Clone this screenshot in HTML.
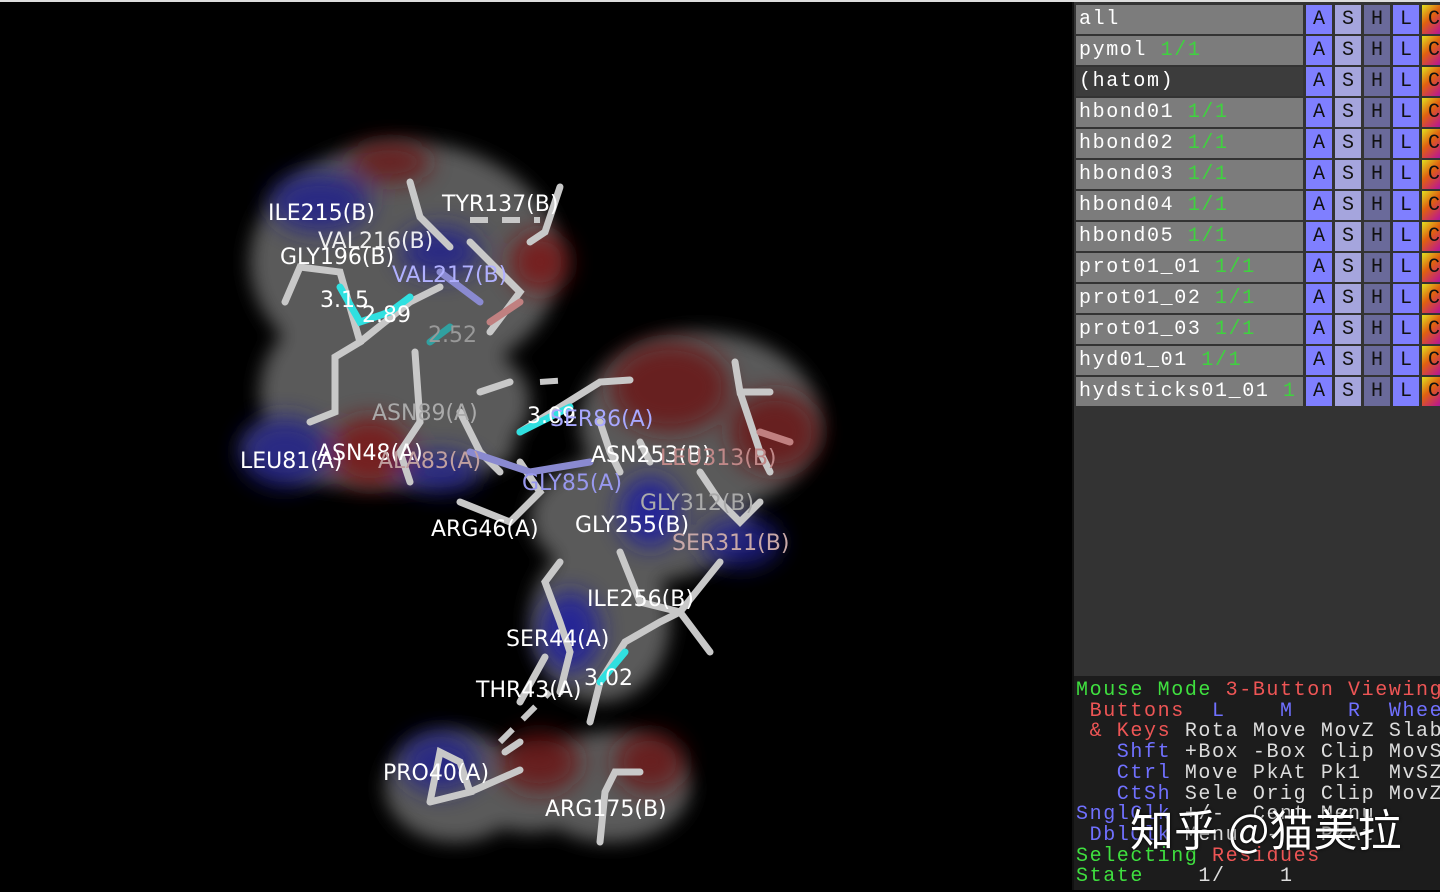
<!DOCTYPE html>
<html><head><meta charset="utf-8"><style>
html,body{margin:0;padding:0;background:#000;width:1440px;height:890px;overflow:hidden;}
#top{position:absolute;left:0;top:0;width:1440px;height:2px;background:#ddd;}
#panel{position:absolute;left:1072px;top:2px;width:368px;height:888px;background:#333;border-left:2px solid #111;}
.row{position:absolute;left:2px;height:29px;width:368px;}
.nm{position:absolute;left:0;top:0;width:227px;height:29px;background:#7c7c7c;color:#fff;font:20px "Liberation Mono",monospace;letter-spacing:1.6px;line-height:29px;padding-left:3px;box-sizing:border-box;white-space:nowrap;overflow:hidden;}
.nm.dk{background:#3c3c3c}
.nm b{font-weight:normal;color:#3fd23f}
.bt{position:absolute;top:0;width:26px;height:29px;font:20px "Liberation Mono",monospace;line-height:29px;text-align:center;color:#111;}
.A{left:230px;background:#7f7fff}.S{left:259px;background:#a5a5dd}.H{left:288px;background:#6a6a9a}.L{left:317px;background:#7f7fff}
.C{left:346px;width:24px;background:linear-gradient(135deg,#e0e020,#e06010 40%,#c02080 80%,#8020c0);}
#info{position:absolute;left:1074px;top:676px;width:366px;height:214px;background:#1c1c1c;font:20px "Liberation Mono",monospace;letter-spacing:1.6px;line-height:20.7px;white-space:pre;color:#ddd;padding-top:5px;padding-left:2px;box-sizing:border-box;overflow:hidden;}
.g{color:#3fe03f}.r{color:#ee5555}.b{color:#7070ff}
#wm{position:absolute;left:1130px;top:795px;font:44px "Noto Sans CJK SC",sans-serif;color:#fff;text-shadow:0 0 3px #000;}
svg text{font-family:"DejaVu Sans","Liberation Sans",sans-serif;font-size:22px;}
</style></head><body>
<div id="top"></div>
<svg width="1072" height="890" style="position:absolute;left:0;top:2px">
<defs>
<filter id="bl" x="-30%" y="-30%" width="160%" height="160%"><feGaussianBlur stdDeviation="9"/></filter>
<filter id="bl2" x="-50%" y="-50%" width="200%" height="200%"><feGaussianBlur stdDeviation="12"/></filter>
</defs>
<g filter="url(#bl)" fill="#5a5a5a">
<ellipse cx="405" cy="260" rx="155" ry="120"/>
<ellipse cx="360" cy="390" rx="100" ry="90"/>
<ellipse cx="380" cy="445" rx="135" ry="40"/>
<ellipse cx="450" cy="400" rx="80" ry="60"/>
<ellipse cx="700" cy="420" rx="120" ry="90"/>
<ellipse cx="640" cy="515" rx="110" ry="65"/>
<ellipse cx="600" cy="620" rx="70" ry="80"/>
<ellipse cx="455" cy="785" rx="70" ry="55"/>
<ellipse cx="610" cy="785" rx="80" ry="55"/>
<ellipse cx="530" cy="790" rx="60" ry="40"/>
</g>
<g filter="url(#bl2)" opacity="0.85">
<ellipse cx="320" cy="200" rx="50" ry="30" fill="#22228a"/>
<ellipse cx="440" cy="250" rx="40" ry="25" fill="#22228a"/>
<ellipse cx="540" cy="260" rx="30" ry="30" fill="#7a1818"/>
<ellipse cx="390" cy="160" rx="40" ry="20" fill="#6a1818"/>
<ellipse cx="285" cy="450" rx="45" ry="35" fill="#22228a"/>
<ellipse cx="370" cy="450" rx="40" ry="35" fill="#7a1818"/>
<ellipse cx="440" cy="470" rx="40" ry="20" fill="#22228a"/>
<ellipse cx="670" cy="385" rx="60" ry="45" fill="#6a1818"/>
<ellipse cx="775" cy="430" rx="45" ry="40" fill="#6a1818"/>
<ellipse cx="650" cy="510" rx="30" ry="35" fill="#1a1aa0"/>
<ellipse cx="740" cy="540" rx="40" ry="25" fill="#22228a"/>
<ellipse cx="570" cy="630" rx="30" ry="40" fill="#1a1aa0"/>
<ellipse cx="440" cy="760" rx="40" ry="30" fill="#22228a"/>
<ellipse cx="540" cy="760" rx="40" ry="30" fill="#6a1818"/>
<ellipse cx="650" cy="760" rx="35" ry="30" fill="#6a1818"/>
</g>
<g stroke="#c8c8c8" stroke-width="7" stroke-linecap="round" fill="none">
<path d="M285 300 L300 265 L340 270 L360 340 L335 355 L335 410 L310 420"/>
<path d="M360 340 L410 300 L440 285"/>
<path d="M415 350 L420 420 L400 450 L410 480"/>
<path d="M470 240 L520 290 L490 330"/>
<path d="M530 240 L545 230 L560 185"/>
<path d="M410 180 L420 215 L450 245"/>
<path d="M480 390 L510 380 M460 410 L480 450 L500 470"/>
<path d="M520 430 L600 380 L630 378"/>
<path d="M520 460 L540 490 L510 520 L460 500"/>
<path d="M600 420 L610 450 L620 470 M640 440 L650 460"/>
<path d="M735 360 L740 390 L770 390 M740 390 L760 450 L770 470"/>
<path d="M700 470 L720 500 L740 520 L760 500"/>
<path d="M560 560 L545 580 L560 620 L570 650 L560 690"/>
<path d="M620 550 L640 600 L680 610 L710 650 M680 610 L720 560 M680 610 L660 620 L625 640 L600 680 L590 720"/>
<path d="M545 655 L520 700 M520 740 L505 750"/>
<path d="M430 800 L470 790 L460 760 L440 750 L430 800 M470 790 L520 768"/>
<path d="M600 840 L605 790 L615 770 L640 770"/>
</g>
<g stroke-width="7" stroke-linecap="round" fill="none">
<path d="M340 285 L360 320 L390 310 L410 295" stroke="#30e0e0"/>
<path d="M520 430 L570 405" stroke="#30e0e0"/>
<path d="M600 680 L625 650" stroke="#30e0e0"/>
<path d="M430 340 L450 325" stroke="#30a0a0"/>
<path d="M440 270 L480 300 M470 450 L530 470 L590 460" stroke="#8a8ad0"/>
<path d="M760 430 L790 440 M490 320 L520 300" stroke="#c08080"/>
</g>
<g stroke="#c8c8c8" stroke-width="6" stroke-dasharray="18 14" fill="none">
<path d="M470 218 L540 218"/><path d="M540 380 L570 378"/><path d="M500 740 L550 690"/>
</g>
<g fill="#fff">
<text x="268" y="218">ILE215(B)</text>
<text x="318" y="246" opacity="0.9">VAL216(B)</text>
<text x="442" y="209">TYR137(B)</text>
<text x="280" y="262">GLY196(B)</text>
<text x="392" y="280" fill="#b0b0ff">VAL217(B)</text>
<text x="320" y="305">3.15</text>
<text x="362" y="320">2.89</text>
<text x="428" y="340" fill="#999">2.52</text>
<text x="372" y="418" fill="#aaa">ASN89(A)</text>
<text x="527" y="421">3.09</text>
<text x="550" y="424" fill="#a8a8ff">SER86(A)</text>
<text x="240" y="466">LEU81(A)</text>
<text x="317" y="458">ASN48(A)</text>
<text x="378" y="466" fill="#c0a0a0">ALA83(A)</text>
<text x="591" y="460">ASN253(B)</text>
<text x="660" y="463" fill="#c08888">LEU313(B)</text>
<text x="522" y="488" fill="#9898ee">GLY85(A)</text>
<text x="640" y="508" fill="#aaa">GLY312(B)</text>
<text x="431" y="534">ARG46(A)</text>
<text x="575" y="530">GLY255(B)</text>
<text x="672" y="548" fill="#c8a8a8">SER311(B)</text>
<text x="587" y="604">ILE256(B)</text>
<text x="506" y="644">SER44(A)</text>
<text x="584" y="683">3.02</text>
<text x="476" y="695">THR43(A)</text>
<text x="383" y="778">PRO40(A)</text>
<text x="545" y="814">ARG175(B)</text>
</g>
</svg>
<div id="panel">
<div class="row" style="top:3px"><div class="nm">all</div><div class="bt A">A</div><div class="bt S">S</div><div class="bt H">H</div><div class="bt L">L</div><div class="bt C">C</div></div>
<div class="row" style="top:34px"><div class="nm">pymol <b>1/1</b></div><div class="bt A">A</div><div class="bt S">S</div><div class="bt H">H</div><div class="bt L">L</div><div class="bt C">C</div></div>
<div class="row" style="top:65px"><div class="nm dk">(hatom)</div><div class="bt A">A</div><div class="bt S">S</div><div class="bt H">H</div><div class="bt L">L</div><div class="bt C">C</div></div>
<div class="row" style="top:96px"><div class="nm">hbond01 <b>1/1</b></div><div class="bt A">A</div><div class="bt S">S</div><div class="bt H">H</div><div class="bt L">L</div><div class="bt C">C</div></div>
<div class="row" style="top:127px"><div class="nm">hbond02 <b>1/1</b></div><div class="bt A">A</div><div class="bt S">S</div><div class="bt H">H</div><div class="bt L">L</div><div class="bt C">C</div></div>
<div class="row" style="top:158px"><div class="nm">hbond03 <b>1/1</b></div><div class="bt A">A</div><div class="bt S">S</div><div class="bt H">H</div><div class="bt L">L</div><div class="bt C">C</div></div>
<div class="row" style="top:189px"><div class="nm">hbond04 <b>1/1</b></div><div class="bt A">A</div><div class="bt S">S</div><div class="bt H">H</div><div class="bt L">L</div><div class="bt C">C</div></div>
<div class="row" style="top:220px"><div class="nm">hbond05 <b>1/1</b></div><div class="bt A">A</div><div class="bt S">S</div><div class="bt H">H</div><div class="bt L">L</div><div class="bt C">C</div></div>
<div class="row" style="top:251px"><div class="nm">prot01_01 <b>1/1</b></div><div class="bt A">A</div><div class="bt S">S</div><div class="bt H">H</div><div class="bt L">L</div><div class="bt C">C</div></div>
<div class="row" style="top:282px"><div class="nm">prot01_02 <b>1/1</b></div><div class="bt A">A</div><div class="bt S">S</div><div class="bt H">H</div><div class="bt L">L</div><div class="bt C">C</div></div>
<div class="row" style="top:313px"><div class="nm">prot01_03 <b>1/1</b></div><div class="bt A">A</div><div class="bt S">S</div><div class="bt H">H</div><div class="bt L">L</div><div class="bt C">C</div></div>
<div class="row" style="top:344px"><div class="nm">hyd01_01 <b>1/1</b></div><div class="bt A">A</div><div class="bt S">S</div><div class="bt H">H</div><div class="bt L">L</div><div class="bt C">C</div></div>
<div class="row" style="top:375px"><div class="nm">hydsticks01_01 <b>1</b></div><div class="bt A">A</div><div class="bt S">S</div><div class="bt H">H</div><div class="bt L">L</div><div class="bt C">C</div></div>
</div>
<div id="info"><span class="g">Mouse Mode </span><span class="r">3-Button Viewing</span>
<span class="r"> Buttons  </span><span class="b">L    M    R  Wheel</span>
<span class="r"> &amp; Keys </span>Rota Move MovZ Slab
<span class="b">   Shft </span>+Box -Box Clip MovS
<span class="b">   Ctrl </span>Move PkAt Pk1  MvSZ
<span class="b">   CtSh </span>Sele Orig Clip MovZ
<span class="b">SnglClk </span>+/-  Cent Menu
<span class="b"> DblClk </span>Menu  -   PkAt
<span class="g">Selecting </span><span class="r">Residues</span>
<span class="g">State </span>   1/    1</div>
<div id="wm">知乎 @猫美拉</div>
</body></html>
